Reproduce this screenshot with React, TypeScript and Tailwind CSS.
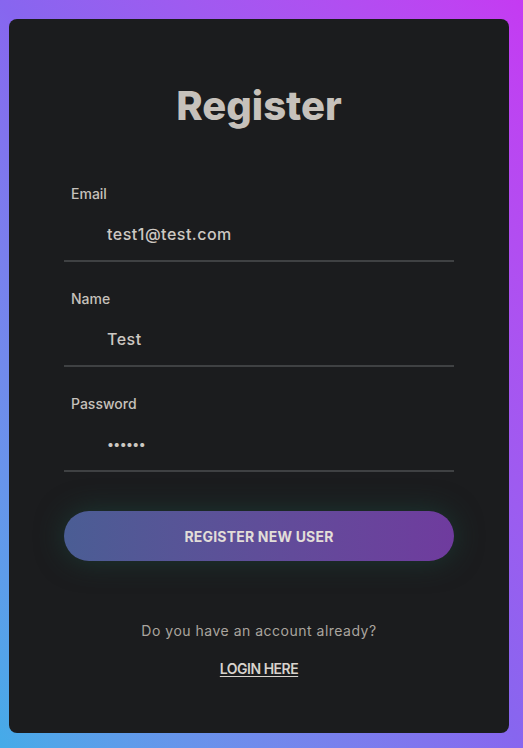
import React from 'react';

export default function App() {
  return (
    <div
      className="min-h-screen w-full bg-gradient-to-bl from-[#c53af2] via-[#8766ef] to-[#44abe8] pl-[9px] pr-[14px] pt-[19px] pb-[15px]"
      style={{ fontFamily: 'Inter, "DejaVu Sans", sans-serif' }}
    >
      <div className="h-[714px] rounded-lg bg-[#1b1c1e] px-[55px] pt-[63px]">
        <h1 className="text-center text-[40px] font-extrabold leading-[48px] text-[#c6c1bb]">Register</h1>

        <form className="mt-[54px]">
          <Field label="Email" value="test1@test.com" />
          <Field label="Name" value="Test" />
          <Field label="Password" value="••••••" last secret />

          <button
            type="button"
            className="mt-[39px] h-[50px] w-full rounded-full bg-gradient-to-r from-[#4a5d94] to-[#6f3b9e] text-[14px] font-bold tracking-[0.2px] text-[#e2ded8] shadow-[0_0_28px_rgba(28,64,58,0.75)]"
          >
            REGISTER NEW USER
          </button>
        </form>

        <p className="mt-[60px] text-center text-[14px] leading-[20px] tracking-[0.5px] text-[#aaa59e]">
          Do you have an account already?
        </p>
        <p className="mt-[17px] text-center leading-[20px]">
          <a className="text-[14px] font-semibold tracking-[-0.5px] text-[#d8d3cd] underline underline-offset-2">
            LOGIN HERE
          </a>
        </p>
      </div>
    </div>
  );
}

function Field({ label, value, last, secret }: { label: string; value: string; last?: boolean; secret?: boolean }) {
  return (
    <div className={last ? '' : 'mb-[27px]'}>
      <label className="block pl-[7px] text-[14px] font-medium leading-[20px] text-[#c6c1bb]">{label}</label>
      <div
        className={
          secret
            ? 'mt-[18px] border-b-2 border-[#3f4143] pb-[14px] pl-[43px] text-[13px] font-medium leading-[24px] tracking-[-0.6px] text-[#cdc8c2]'
            : 'mt-[18px] border-b-2 border-[#3f4143] pb-[14px] pl-[43px] text-[16px] font-medium leading-[24px] tracking-[0.5px] text-[#cdc8c2]'
        }
      >
        {value}
      </div>
    </div>
  );
}
